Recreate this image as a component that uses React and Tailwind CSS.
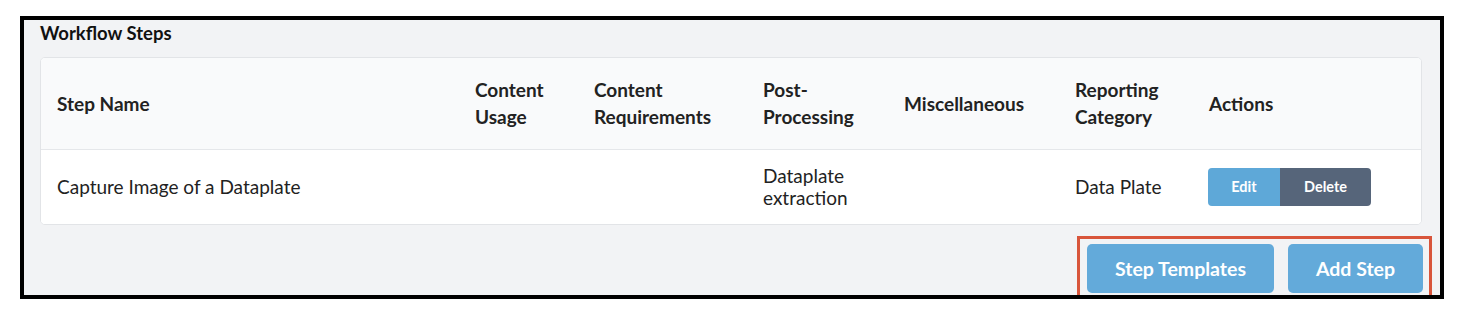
import React from "react";

const cols = [
  { w: 418, h: ["Step Name"] },
  { w: 119, h: ["Content", "Usage"] },
  { w: 169, h: ["Content", "Requirements"] },
  { w: 141, h: ["Post-", "Processing"] },
  { w: 171, h: ["Miscellaneous"] },
  { w: 134, h: ["Reporting", "Category"] },
  { w: 229, h: ["Actions"] },
];

export default function App() {
  return (
    <div className="w-[1470px] h-[318px] bg-white pt-[16px] pl-[20px]" style={{ fontFamily: "Lato, 'Noto Sans', sans-serif" }}>
      <div className="w-[1424px] h-[283px] border-4 border-black bg-[#f2f3f5] pl-[16px] pr-[18px] overflow-hidden flex flex-col">
        <div className="shrink-0 h-[26px] leading-[26px] text-[18.5px] font-bold text-[#111]">Workflow Steps</div>
        <div className="shrink-0 mt-[11px] rounded-[5px] border border-[#e2e4e7] overflow-hidden bg-white">
          <table className="table-fixed border-collapse w-full text-[#222]">
            <colgroup>
              {cols.map((c, i) => (
                <col key={i} style={{ width: c.w }} />
              ))}
            </colgroup>
            <thead>
              <tr className="bg-[#f9fafb] border-b border-[#e5e7ea]">
                {cols.map((c, i) => (
                  <th key={i} className="h-[91px] px-4 text-left align-middle font-bold text-[19px] leading-[27px] text-[#222]">
                    {c.h.map((t, j) => (
                      <div key={j}>{t}</div>
                    ))}
                  </th>
                ))}
              </tr>
            </thead>
            <tbody>
              <tr className="bg-white">
                <td className="h-[75px] px-4 text-[19px] leading-[22px] align-middle">Capture Image of a Dataplate</td>
                <td className="px-4"></td>
                <td className="px-4"></td>
                <td className="px-4 text-[19px] leading-[22px] align-middle">
                  <div>Dataplate</div>
                  <div>extraction</div>
                </td>
                <td className="px-4"></td>
                <td className="px-4 text-[19px] leading-[22px] align-middle">Data Plate</td>
                <td className="px-[15px] align-middle">
                  <div className="flex h-[38px] w-[163px] rounded-[4px] overflow-hidden text-[14.5px] font-bold text-white">
                    <div className="w-[72px] bg-[#5ea8d8] flex items-center justify-center">Edit</div>
                    <div className="w-[91px] bg-[#56657a] flex items-center justify-center">Delete</div>
                  </div>
                </td>
              </tr>
            </tbody>
          </table>
        </div>
        <div className="shrink-0 flex justify-end -mr-[10px] mt-[11px]">
          <div className="flex gap-[14px] border-[3px] border-b-0 border-[#d8553b] pt-[5px] pl-[7px] pr-[6px] h-[60px]">
            <button className="w-[187px] h-[49px] rounded-[5px] bg-[#63aada] text-white font-bold text-[19.5px]">Step Templates</button>
            <button className="w-[135px] h-[49px] rounded-[5px] bg-[#63aada] text-white font-bold text-[19.5px]">Add Step</button>
          </div>
        </div>
      </div>
    </div>
  );
}
